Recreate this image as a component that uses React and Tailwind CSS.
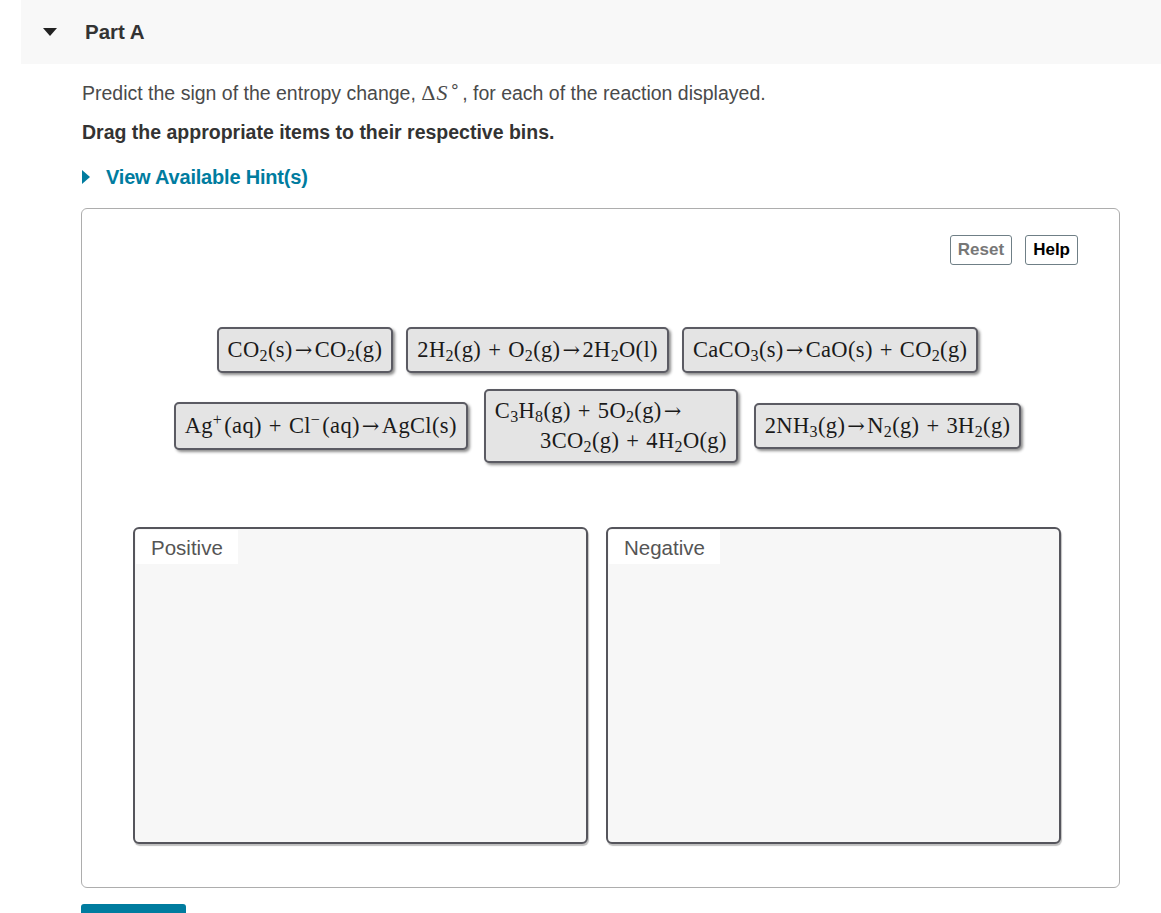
import React from 'react';

const serif = { fontFamily: '"Liberation Serif", "DejaVu Serif", serif' };

function Chip({ children, className = '' }) {
  return (
    <div
      className={`rounded-[5px] border-2 border-[#5b5b63] bg-[#e4e4e4] px-[9px] text-[22.5px] leading-[26px] tracking-[0.35px] text-[#1a1a1a] shadow-[2px_2px_3px_rgba(0,0,0,0.45)] ${className}`}
      style={serif}
    >
      {children}
    </div>
  );
}

const S = ({ children }) => <sub className="text-[16px]">{children}</sub>;
const P = ({ children }) => <sup className="mr-[2px] text-[16px]">{children}</sup>;
const Arrow = () => (
  <span className="mx-[2px] text-[21px]" style={{ fontFamily: '"DejaVu Serif", serif' }}>→</span>
);
const Plus = () => <span className="mx-[7px]">+</span>;

function Bin({ label }) {
  return (
    <div className="h-[317px] w-[455px] rounded-[6px] border-2 border-[#55555c] bg-[#f7f7f7] shadow-[1px_2px_1px_rgba(0,0,0,0.25)]">
      <div className="ml-px mt-px inline-block bg-white pl-[15px] pr-[15px] pt-[6px] pb-[4px] text-[20.5px] leading-[24px] text-[#555]">
        {label}
      </div>
    </div>
  );
}

export default function App() {
  return (
    <div className="min-h-[913px] bg-white text-[#333]" style={{ fontFamily: '"Liberation Sans", Arial, sans-serif' }}>
      {/* header */}
      <div className="ml-[21px] flex h-[64px] items-center bg-[#f8f8f8]">
        <div className="ml-[22px] h-0 w-0 border-x-[7px] border-t-[8px] border-x-transparent border-t-[#222]" />
        <div className="ml-[28px] text-[20.5px] font-bold text-[#333]">Part A</div>
      </div>

      <div className="pl-[82px]">
        <p className="mt-[17px] text-[19.5px] leading-[24px] text-[#4a4a4a]">
          Predict the sign of the entropy change,{' '}
          <span className="text-[22px]" style={serif}>
            Δ<i className="ml-[1px]">S</i>
            <sup className="ml-[2px] mr-[2px] text-[17px]" style={{ fontFamily: '"DejaVu Sans", sans-serif' }}>∘</sup>
          </span>
          , for each of the reaction displayed.
        </p>
        <p className="mt-[15px] text-[19.5px] font-bold leading-[24px] text-[#333]">
          Drag the appropriate items to their respective bins.
        </p>
        <div className="mt-[18px] flex items-center text-[20px] font-bold text-[#007c9f]">
          <div className="h-0 w-0 border-y-[7px] border-l-[8px] border-y-transparent border-l-[#007c9f]" />
          <span className="ml-[16px] tracking-[-0.2px]">View Available Hint(s)</span>
        </div>

        {/* main box */}
        <div className="mt-[16px] h-[680px] w-[1039px] -ml-px rounded-[6px] border border-[#adadad] bg-white pt-[26px]">
          <div className="flex justify-end gap-[13px] pr-[41px]">
            <button className="h-[30px] rounded-[3px] border border-[#6f7f86] px-[7px] text-[17px] font-bold text-[#777]">Reset</button>
            <button className="h-[30px] rounded-[3px] border border-[#6f7f86] px-[7px] text-[17px] font-bold text-black">Help</button>
          </div>

          <div className="mt-[62px] flex flex-col items-center gap-[16px] pr-[6px]">
            <div className="flex items-center gap-[13px]">
              <Chip className="py-[8px]">
                CO<S>2</S>(s)<Arrow />CO<S>2</S>(g)
              </Chip>
              <Chip className="py-[8px]">
                2H<S>2</S>(g)<Plus />O<S>2</S>(g)<Arrow />2H<S>2</S>O(l)
              </Chip>
              <Chip className="py-[8px]">
                CaCO<S>3</S>(s)<Arrow />CaO(s)<Plus />CO<S>2</S>(g)
              </Chip>
            </div>
            <div className="flex items-center gap-[16px]">
              <Chip className="py-[9px]">
                Ag<P>+</P>(aq)<Plus />Cl<P>−</P>(aq)<Arrow />AgCl(s)
              </Chip>
              <Chip className="w-[254px] py-[7px]">
                <div>
                  C<S>3</S>H<S>8</S>(g)<Plus />5O<S>2</S>(g)<Arrow />
                </div>
                <div className="mt-[4px] text-right">
                  3CO<S>2</S>(g)<Plus />4H<S>2</S>O(g)
                </div>
              </Chip>
              <Chip className="py-[8px]">
                2NH<S>3</S>(g)<Arrow />N<S>2</S>(g)<Plus />3H<S>2</S>(g)
              </Chip>
            </div>
          </div>

          <div className="mt-[64px] flex gap-[18px] pl-[51px]">
            <Bin label="Positive" />
            <Bin label="Negative" />
          </div>
        </div>

        <div className="mt-[16px] h-[20px] w-[105px] -ml-px rounded-t-[3px] bg-[#007c9f]" />
      </div>
    </div>
  );
}
